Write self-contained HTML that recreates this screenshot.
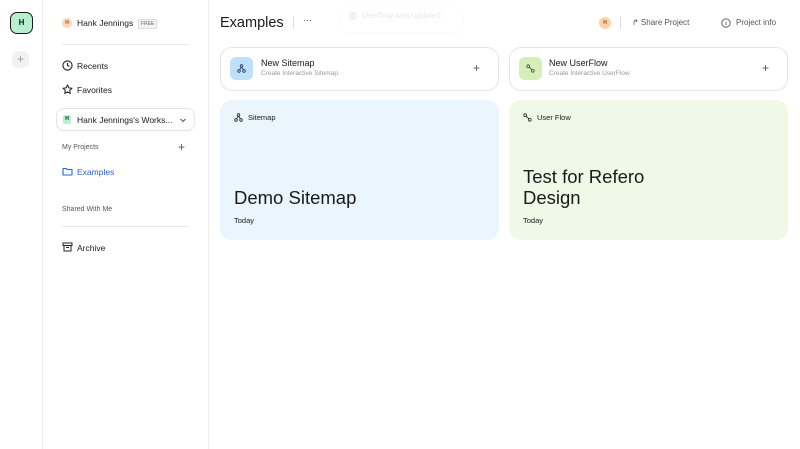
<!DOCTYPE html>
<html><head><meta charset="utf-8"><style>
*{margin:0;padding:0;box-sizing:border-box}
body{width:800px;height:449px;background:#fff;font-family:"Liberation Sans",sans-serif;color:#1a1a1a;position:relative;overflow:hidden}
.abs{position:absolute}
.rail{left:0;top:0;width:43px;height:449px;border-right:1px solid #ececec}
.sb{left:43px;top:0;width:166px;height:449px;border-right:1px solid #ececec}
.t{position:absolute;white-space:nowrap}
.hr{position:absolute;height:1px;background:#e8e8e8}
.card{position:absolute;border:1px solid #e6e6e6;border-radius:12px;background:#fff}
.big{position:absolute;border-radius:12px}
svg{position:absolute}
</style></head><body>
<div class="abs rail"></div>
<div class="abs" style="left:10px;top:12px;width:23px;height:22px;border:1.5px solid #1a1a1a;border-radius:7px;background:#b8f0cf;font-size:8px;font-weight:bold;text-align:center;line-height:19px">H</div>
<div class="abs" style="left:12px;top:51px;width:17px;height:17px;border-radius:5px;background:#f2f2f2;color:#999;font-size:12px;text-align:center;line-height:17px">+</div>
<div class="abs sb"></div>
<div class="abs" style="left:62px;top:18px;width:10px;height:10px;border-radius:50%;background:#fbd9b8;font-size:5px;font-weight:bold;text-align:center;line-height:10px;color:#a04a10">H</div>
<div class="t" style="left:77px;top:18px;font-size:8.5px">Hank Jennings</div>
<div class="t" style="left:138px;top:19px;font-size:5px;border:1px solid #ddd;background:#f4f4f4;padding:1px 2px;color:#666">FREE</div>
<div class="hr" style="left:62px;top:44px;width:127px"></div>
<svg style="left:62px;top:60px" width="11" height="11" viewBox="0 0 12 12"><circle cx="6" cy="6" r="5" fill="none" stroke="#222" stroke-width="1.2"/><path d="M6 3v3l2 1" fill="none" stroke="#222" stroke-width="1.2"/></svg>
<div class="t" style="left:77px;top:61px;font-size:8.5px">Recents</div>
<svg style="left:62px;top:84px" width="11" height="11" viewBox="0 0 12 12"><path d="M6 1l1.5 3.2 3.4.4-2.5 2.3.7 3.4L6 8.6 2.9 10.3l.7-3.4L1.1 4.6l3.4-.4z" fill="none" stroke="#222" stroke-width="1.1" stroke-linejoin="round"/></svg>
<div class="t" style="left:77px;top:85px;font-size:8.5px">Favorites</div>
<div class="abs" style="left:56px;top:108px;width:139px;height:23px;border:1px solid #e3e3e3;border-radius:8px"></div>
<div class="abs" style="left:63px;top:115px;width:8px;height:9px;border-radius:2px;background:#b8f0cf;font-size:5px;font-weight:bold;text-align:center;line-height:9px">H</div>
<div class="t" style="left:77px;top:115px;font-size:8.5px">Hank Jennings's Works...</div>
<svg style="left:179px;top:116px" width="8" height="8" viewBox="0 0 8 8"><path d="M1.5 3l2.5 2.5L6.5 3" fill="none" stroke="#555" stroke-width="1"/></svg>
<div class="t" style="left:62px;top:144px;font-size:7px;color:#555">My Projects</div>
<div class="t" style="left:178px;top:140px;font-size:12px;color:#555">+</div>
<svg style="left:62px;top:167px" width="11" height="9" viewBox="0 0 11 9"><path d="M1 1.5h3.2l1 1H10v5.5H1z" fill="none" stroke="#2a62d8" stroke-width="1.1" stroke-linejoin="round"/></svg>
<div class="t" style="left:77px;top:167px;font-size:8.5px;color:#2a62d8">Examples</div>
<div class="t" style="left:62px;top:206px;font-size:7px;color:#555">Shared With Me</div>
<div class="hr" style="left:62px;top:226px;width:127px"></div>
<svg style="left:62px;top:242px" width="11" height="10" viewBox="0 0 11 10"><path d="M1 1h9v2.5H1zM2 3.5v5.5h7V3.5M4 5.5h3" fill="none" stroke="#222" stroke-width="1"/></svg>
<div class="t" style="left:77px;top:243px;font-size:8.5px">Archive</div>

<div class="t" style="left:220px;top:15px;font-size:14.5px">Examples</div>
<div class="abs" style="left:293px;top:17px;width:1px;height:12px;background:#ddd"></div>
<div class="t" style="left:303px;top:15px;font-size:9px;color:#444">···</div>
<div class="abs" style="left:340px;top:6px;width:122px;height:26px;border-radius:8px;box-shadow:0 1px 4px rgba(0,0,0,0.03)"></div>
<div class="abs" style="left:349px;top:12px;width:8px;height:8px;border-radius:50%;background:#eaf6ea"></div>
<div class="t" style="left:362px;top:11px;font-size:8px;color:#e8e8e8">Userflow was updated</div>
<div class="abs" style="left:599px;top:17px;width:12px;height:12px;border-radius:50%;background:#fbd3a9;font-size:5px;font-weight:bold;text-align:center;line-height:12px;color:#a04a10">H</div>
<div class="abs" style="left:620px;top:17px;width:1px;height:12px;background:#ddd"></div>
<div class="t" style="left:632px;top:18px;font-size:8px;color:#555">↱ Share Project</div>
<svg style="left:721px;top:18px" width="10" height="10" viewBox="0 0 10 10"><circle cx="5" cy="5" r="4.2" fill="none" stroke="#555" stroke-width=".9"/><path d="M5 4.3v3M5 2.8v.4" stroke="#555" stroke-width=".9"/></svg>
<div class="t" style="left:736px;top:18px;font-size:8px;color:#555">Project info</div>

<div class="card" style="left:220px;top:47px;width:279px;height:44px"></div>
<div class="abs" style="left:230px;top:57px;width:23px;height:23px;border-radius:6px;background:#bfe0fb"></div>
<svg style="left:237px;top:64px" width="9" height="9" viewBox="0 0 9 9"><circle cx="4.5" cy="2" r="1.3" fill="none" stroke="#235" stroke-width=".8"/><circle cx="2" cy="7" r="1.3" fill="none" stroke="#235" stroke-width=".8"/><circle cx="7" cy="7" r="1.3" fill="none" stroke="#235" stroke-width=".8"/><path d="M4.5 3.3L2.5 5.8M4.5 3.3l2 2.5" stroke="#235" stroke-width=".8"/></svg>
<div class="t" style="left:261px;top:58px;font-size:9px">New Sitemap</div>
<div class="t" style="left:261px;top:70px;font-size:6.5px;color:#999">Create Interactive Sitemap</div>
<div class="t" style="left:473px;top:61px;font-size:12px;color:#555">+</div>

<div class="card" style="left:509px;top:47px;width:279px;height:44px"></div>
<div class="abs" style="left:519px;top:57px;width:23px;height:23px;border-radius:6px;background:#d6efb8"></div>
<svg style="left:526px;top:64px" width="9" height="9" viewBox="0 0 9 9"><circle cx="2.2" cy="2.2" r="1.4" fill="none" stroke="#353" stroke-width=".8"/><circle cx="6.8" cy="6.8" r="1.4" fill="none" stroke="#353" stroke-width=".8"/><path d="M3.3 3.3l2.4 2.4" stroke="#353" stroke-width=".8"/></svg>
<div class="t" style="left:549px;top:58px;font-size:9px">New UserFlow</div>
<div class="t" style="left:549px;top:70px;font-size:6.5px;color:#999">Create Interactive UserFlow</div>
<div class="t" style="left:762px;top:61px;font-size:12px;color:#555">+</div>

<div class="big" style="left:220px;top:100px;width:279px;height:140px;background:#eaf5fe"></div>
<svg style="left:234px;top:113px" width="9" height="9" viewBox="0 0 9 9"><circle cx="4.5" cy="2" r="1.3" fill="none" stroke="#222" stroke-width=".8"/><circle cx="2" cy="7" r="1.3" fill="none" stroke="#222" stroke-width=".8"/><circle cx="7" cy="7" r="1.3" fill="none" stroke="#222" stroke-width=".8"/><path d="M4.5 3.3L2.5 5.8M4.5 3.3l2 2.5" stroke="#222" stroke-width=".8"/></svg>
<div class="t" style="left:248px;top:113px;font-size:7.5px">Sitemap</div>
<div class="t" style="left:234px;top:187px;font-size:18.5px">Demo Sitemap</div>
<div class="t" style="left:234px;top:216px;font-size:7.5px">Today</div>

<div class="big" style="left:509px;top:100px;width:279px;height:140px;background:#f0f9e8"></div>
<svg style="left:523px;top:113px" width="9" height="9" viewBox="0 0 9 9"><circle cx="2.2" cy="2.2" r="1.4" fill="none" stroke="#222" stroke-width=".8"/><circle cx="6.8" cy="6.8" r="1.4" fill="none" stroke="#222" stroke-width=".8"/><path d="M3.3 3.3l2.4 2.4" stroke="#222" stroke-width=".8"/></svg>
<div class="t" style="left:537px;top:113px;font-size:7.5px">User Flow</div>
<div class="t" style="left:523px;top:166px;font-size:18.5px;line-height:21px">Test for Refero<br>Design</div>
<div class="t" style="left:523px;top:216px;font-size:7.5px">Today</div>
</body></html>
